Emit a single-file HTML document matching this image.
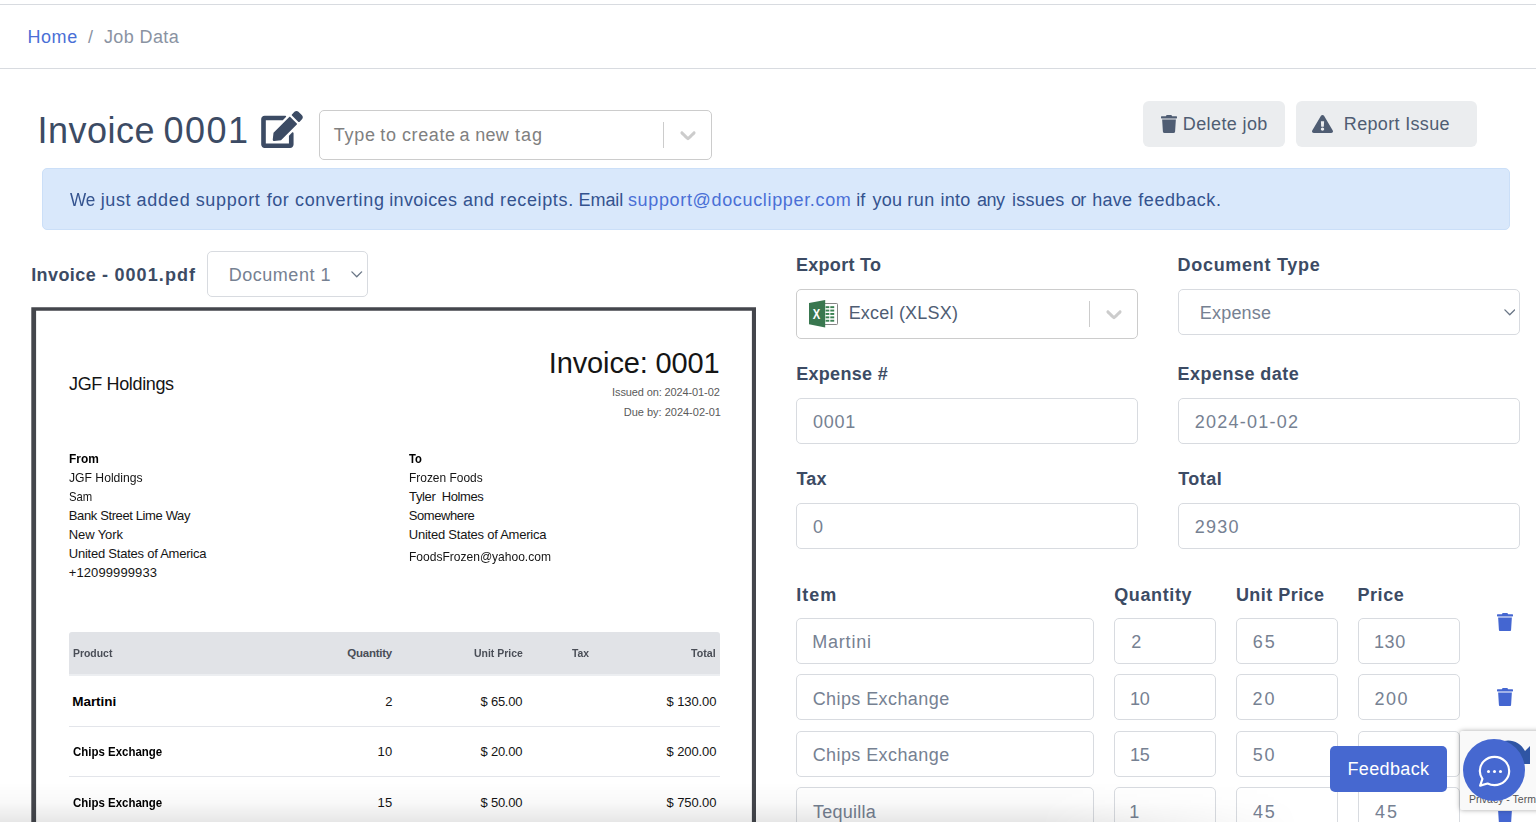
<!DOCTYPE html>
<html lang="en">
<head>
<meta charset="utf-8">
<title>Job Data - Invoice 0001</title>
<style>
*{box-sizing:border-box;margin:0;padding:0}
html,body{width:1536px;height:822px;overflow:hidden;background:#fff}
body{font-family:"Liberation Sans",sans-serif;color:#3c4b64;font-size:18px;position:relative}
.abs{position:absolute}
.t{position:absolute;white-space:nowrap;font-family:"Liberation Sans",sans-serif;font-weight:400;transform-origin:0 50%}
.line{left:0;width:1536px;height:1px;background:#d8dbe0}
.rsel{height:50px;border:1px solid #cccccc;border-radius:5px;background:#fff}
.rsel .bar{position:absolute;top:11px;width:1px;height:26px;background:#cccccc}
.btn{top:101px;height:46px;border-radius:6px;background:#ebedef}
.alert{left:42px;top:168px;width:1468px;height:62px;border:1px solid #cbdff8;border-radius:5px;background:#d9e8fb}
.inp{height:46px;border:1px solid #d8dbe0;border-radius:5px;background:#fff}
.frame{left:32px;top:307px;width:724px;height:540px;border:4px solid #47494f;background:#fff}
.thead{left:69px;top:632px;width:651px;height:44px;background:#e1e3e7;border-radius:3px 3px 0 0;border-bottom:2px solid #eceef1}
.hr{left:69px;width:651px;height:1px;background:#e3e5ea}
.blue{background:#4668d0}
</style>
</head>
<body>
<!-- top bar / breadcrumb -->
<div class="abs line" style="top:4px"></div>
<nav><span id="c1" class="t" style="left:27.40px;top:27px;font-size:18px;line-height:20px;color:#4a6fd6;letter-spacing:0.598px;">Home</span><span id="c2" class="t" style="left:87.99px;top:27px;font-size:18px;line-height:20px;color:#8a93a2;">/</span><span id="c3" class="t" style="left:103.93px;top:27px;font-size:18px;line-height:20px;color:#8a93a2;letter-spacing:0.401px;">Job Data</span></nav>
<div class="abs line" style="top:68px"></div>

<!-- title row -->
<h1><span id="h1_0" class="t" style="left:37.40px;top:110px;font-size:36px;line-height:41px;color:#3c4b64;letter-spacing:0.505px;">Invoice</span> <span id="h1_1" class="t" style="left:163.60px;top:110px;font-size:36px;line-height:41px;color:#3c4b64;letter-spacing:1.457px;">0001</span> </h1>
<svg class="abs" style="left:260.700px;top:111.400px" width="42" height="37" viewBox="0 0 576 512"><path fill="#3c4b64" d="M402.6 83.2l90.2 90.2c3.800 3.800 3.800 10 0 13.800L274.400 405.600l-92.800 10.300c-12.400 1.400-22.900-9.100-21.500-21.500l10.300-92.800L388.800 83.200c3.800-3.800 10-3.800 13.800 0zm162-22.900l-48.800-48.800c-15.200-15.200-39.900-15.200-55.200 0l-35.400 35.400c-3.800 3.800-3.800 10 0 13.800l90.200 90.200c3.800 3.800 10 3.800 13.800 0l35.400-35.400c15.200-15.300 15.200-40 0-55.200zM384 346.200V448H64V128h229.800c3.200 0 6.200-1.300 8.500-3.500l40-40c7.600-7.600 2.200-20.500-8.500-20.500H48C21.500 64 0 85.500 0 112v352c0 26.500 21.500 48 48 48h352c26.500 0 48-21.500 48-48V306.200c0-10.700-12.900-16-20.500-8.500l-40 40c-2.200 2.300-3.500 5.300-3.500 8.500z"/></svg>

<div class="abs rsel" style="left:319px;top:110px;width:393px">
  <div class="bar" style="left:343px"></div>
  <svg class="abs" style="left:355px;top:11px" width="26" height="26" viewBox="0 0 20 20"><path fill="#cccccc" d="M4.516 7.548c0.436-0.446 1.043-0.481 1.576 0l3.908 3.747 3.908-3.747c0.533-0.481 1.141-0.446 1.574 0 0.436 0.445 0.408 1.197 0 1.615-0.406 0.418-4.695 4.502-4.695 4.502-0.217 0.223-0.502 0.335-0.787 0.335s-0.570-0.112-0.789-0.335c0 0-4.287-4.084-4.695-4.502s-0.436-1.170 0-1.615z"/></svg>
</div>
<span id="ph_0" class="t" style="left:333.86px;top:125px;font-size:18px;line-height:20px;color:#808080;letter-spacing:0.691px;">Type</span> <span id="ph_1" class="t" style="left:380.26px;top:125px;font-size:18px;line-height:20px;color:#808080;letter-spacing:0.829px;">to</span> <span id="ph_2" class="t" style="left:402.00px;top:125px;font-size:18px;line-height:20px;color:#808080;letter-spacing:0.604px;">create</span> <span id="ph_3" class="t" style="left:459.57px;top:125px;font-size:18px;line-height:20px;color:#808080;">a</span> <span id="ph_4" class="t" style="left:475.16px;top:125px;font-size:18px;line-height:20px;color:#808080;letter-spacing:0.277px;">new</span> <span id="ph_5" class="t" style="left:515.04px;top:125px;font-size:18px;line-height:20px;color:#808080;letter-spacing:1.035px;">tag</span> 

<div class="abs btn" style="left:1143px;width:142px">
  <svg class="abs" style="left:17.500px;top:14px" width="16" height="18" viewBox="0 0 448 512" preserveAspectRatio="none"><path fill="#4f5d73" d="M432 32H312l-9.400-18.700A24 24 0 0 0 281.100 0H166.800a23.720 23.720 0 0 0-21.400 13.300L136 32H16A16 16 0 0 0 0 48v32a16 16 0 0 0 16 16h416a16 16 0 0 0 16-16V48a16 16 0 0 0-16-16zM53.200 467a48 48 0 0 0 47.900 45h245.800a48 48 0 0 0 47.900-45L416 128H32z"/></svg>
</div>
<span id="b1" class="t" style="left:1182.84px;top:114px;font-size:18px;line-height:20px;color:#4f5d73;letter-spacing:0.389px;">Delete job</span>
<div class="abs btn" style="left:1296px;width:181px">
  <svg class="abs" style="left:16px;top:14px" width="21" height="18" viewBox="0 0 576 512" preserveAspectRatio="none"><path fill="#4f5d73" d="M569.517 440.013C587.975 472.007 564.806 512 527.940 512H48.054c-36.937 0-59.999-40.055-41.577-71.987L246.423 23.985c18.467-32.009 64.720-31.951 83.154 0l239.940 416.028zM288 354c-25.405 0-46 20.595-46 46s20.595 46 46 46 46-20.595 46-46-20.595-46-46-46zm-43.673-165.346l7.418 136c.347 6.364 5.609 11.346 11.982 11.346h48.546c6.373 0 11.635-4.982 11.982-11.346l7.418-136c.375-6.874-5.098-12.654-11.982-12.654h-63.383c-6.884 0-12.356 5.780-11.981 12.654z"/></svg>
</div>
<span id="b2" class="t" style="left:1343.80px;top:114px;font-size:18px;line-height:20px;color:#4f5d73;letter-spacing:0.334px;">Report Issue</span>

<div class="abs alert"></div>
<p><span id="a1_0" class="t" style="left:70.03px;top:190px;font-size:18px;line-height:20px;color:#34538f;transform:scaleX(0.9524);">We</span> <span id="a1_1" class="t" style="left:100.75px;top:190px;font-size:18px;line-height:20px;color:#34538f;letter-spacing:0.577px;">just</span> <span id="a1_2" class="t" style="left:136.39px;top:190px;font-size:18px;line-height:20px;color:#34538f;letter-spacing:0.804px;">added</span> <span id="a1_3" class="t" style="left:195.63px;top:190px;font-size:18px;line-height:20px;color:#34538f;letter-spacing:0.698px;">support</span> <span id="a1_4" class="t" style="left:266.63px;top:190px;font-size:18px;line-height:20px;color:#34538f;letter-spacing:0.603px;">for</span> <span id="a1_5" class="t" style="left:295.00px;top:190px;font-size:18px;line-height:20px;color:#34538f;letter-spacing:0.650px;">converting</span> <span id="a1_6" class="t" style="left:389.14px;top:190px;font-size:18px;line-height:20px;color:#34538f;letter-spacing:0.408px;">invoices</span> <span id="a1_7" class="t" style="left:463.06px;top:190px;font-size:18px;line-height:20px;color:#34538f;letter-spacing:0.430px;">and</span> <span id="a1_8" class="t" style="left:500.00px;top:190px;font-size:18px;line-height:20px;color:#34538f;letter-spacing:0.641px;">receipts.</span> <span id="a1_9" class="t" style="left:578.50px;top:190px;font-size:18px;line-height:20px;color:#34538f;letter-spacing:-0.062px;">Email</span> <span id="a2" class="t" style="left:627.89px;top:190px;font-size:18px;line-height:20px;color:#4a6fd6;letter-spacing:0.661px;">support@docuclipper.com</span><span id="a3_0" class="t" style="left:856.16px;top:190px;font-size:18px;line-height:20px;color:#34538f;letter-spacing:0.134px;">if</span> <span id="a3_1" class="t" style="left:872.49px;top:190px;font-size:18px;line-height:20px;color:#34538f;letter-spacing:0.240px;">you</span> <span id="a3_2" class="t" style="left:907.14px;top:190px;font-size:18px;line-height:20px;color:#34538f;letter-spacing:0.536px;">run</span> <span id="a3_3" class="t" style="left:940.52px;top:190px;font-size:18px;line-height:20px;color:#34538f;letter-spacing:0.241px;">into</span> <span id="a3_4" class="t" style="left:977.05px;top:190px;font-size:18px;line-height:20px;color:#34538f;letter-spacing:-0.517px;">any</span> <span id="a3_5" class="t" style="left:1012.00px;top:190px;font-size:18px;line-height:20px;color:#34538f;letter-spacing:0.240px;">issues</span> <span id="a3_6" class="t" style="left:1071.00px;top:190px;font-size:18px;line-height:20px;color:#34538f;letter-spacing:-0.661px;">or</span> <span id="a3_7" class="t" style="left:1092.14px;top:190px;font-size:18px;line-height:20px;color:#34538f;letter-spacing:0.248px;">have</span> <span id="a3_8" class="t" style="left:1138.29px;top:190px;font-size:18px;line-height:20px;color:#34538f;letter-spacing:0.577px;">feedback.</span> </p>

<!-- left column: document preview -->
<span id="fn_0" class="t" style="left:31.16px;top:265px;font-size:18px;line-height:20px;color:#3c4b64;font-weight:700;letter-spacing:0.411px;">Invoice</span> <span id="fn_1" class="t" style="left:102.07px;top:265px;font-size:18px;line-height:20px;color:#3c4b64;font-weight:700;">-</span> <span id="fn_2" class="t" style="left:114.41px;top:265px;font-size:18px;line-height:20px;color:#3c4b64;font-weight:700;letter-spacing:1.086px;">0001.pdf</span> 
<div class="abs inp" style="left:207px;top:251px;width:161px">
  <svg class="abs" style="left:143.300px;top:18.900px" width="11.500" height="7" viewBox="0 0 11.500 7"><path d="M0.900 0.900l4.850 4.900L10.600 0.900" fill="none" stroke="#6a7686" stroke-width="1.350" stroke-linecap="round" stroke-linejoin="round"/></svg>
</div>
<span id="ds" class="t" style="left:228.81px;top:265px;font-size:18px;line-height:20px;color:#768192;letter-spacing:0.511px;">Document 1</span>

<svg class="abs" style="left:30px;top:306px" width="728" height="516" viewBox="30 306 728 516"><rect x="31" y="307" width="725" height="520" fill="#fff"/><path fill="#44464c" fill-rule="evenodd" d="M31.300 307.200H756V830H31.300zM36.100 310.700H751.900V830H36.100z"/></svg>
<section>
<span id="p1" class="t" style="left:69.01px;top:374px;font-size:18px;line-height:20px;color:#151515;letter-spacing:-0.356px;">JGF Holdings</span><span id="p2" class="t" style="left:548.80px;top:347px;font-size:29px;line-height:32px;color:#151515;letter-spacing:-0.135px;">Invoice: 0001</span><span id="p3" class="t" style="left:612.12px;top:386px;font-size:11px;line-height:12px;color:#5a5a5a;letter-spacing:-0.121px;">Issued on: 2024-01-02</span><span id="p4" class="t" style="left:623.70px;top:406px;font-size:11px;line-height:12px;color:#5a5a5a;">Due by: 2024-02-01</span>
<span id="f0" class="t" style="left:69.22px;top:451px;font-size:13px;line-height:15px;color:#000;font-weight:700;transform:scaleX(0.9149);">From</span><span id="f1" class="t" style="left:68.62px;top:470px;font-size:13px;line-height:15px;color:#151515;transform:scaleX(0.9357);">JGF Holdings</span><span id="f2" class="t" style="left:68.81px;top:489px;font-size:13px;line-height:15px;color:#151515;transform:scaleX(0.8689);">Sam</span><span id="f3" class="t" style="left:68.81px;top:508px;font-size:13px;line-height:15px;color:#151515;letter-spacing:-0.381px;">Bank Street Lime Way</span><span id="f4" class="t" style="left:68.81px;top:527px;font-size:13px;line-height:15px;color:#151515;letter-spacing:-0.117px;">New York</span><span id="f5" class="t" style="left:68.81px;top:546px;font-size:13px;line-height:15px;color:#151515;letter-spacing:-0.236px;">United States of America</span><span id="f6" class="t" style="left:68.71px;top:565px;font-size:13px;line-height:15px;color:#151515;letter-spacing:0.107px;">+12099999933</span>
<span id="t0" class="t" style="left:409.14px;top:451px;font-size:13px;line-height:15px;color:#000;font-weight:700;transform:scaleX(0.8628);">To</span><span id="t1" class="t" style="left:409.21px;top:470px;font-size:13px;line-height:15px;color:#151515;transform:scaleX(0.9180);">Frozen Foods</span><span id="t2" class="t" style="left:409.11px;top:489px;font-size:13px;line-height:15px;color:#151515;letter-spacing:-0.393px;">Tyler&nbsp; Holmes</span><span id="t3" class="t" style="left:408.79px;top:508px;font-size:13px;line-height:15px;color:#151515;letter-spacing:-0.421px;">Somewhere</span><span id="t4" class="t" style="left:408.81px;top:527px;font-size:13px;line-height:15px;color:#151515;letter-spacing:-0.236px;">United States of America</span><span id="t5" class="t" style="left:409.33px;top:549px;font-size:13px;line-height:15px;color:#151515;transform:scaleX(0.9254);">FoodsFrozen@yahoo.com</span>
<div class="abs thead"></div>
<span id="th1" class="t" style="left:72.77px;top:647px;font-size:11.5px;line-height:12px;color:#4a4e57;font-weight:700;transform:scaleX(0.9060);">Product</span><span id="th2" class="t" style="left:347.28px;top:647px;font-size:11.5px;line-height:12px;color:#4a4e57;font-weight:700;letter-spacing:-0.237px;">Quantity</span><span id="th3" class="t" style="left:473.85px;top:647px;font-size:11.5px;line-height:12px;color:#4a4e57;font-weight:700;transform:scaleX(0.9095);">Unit Price</span><span id="th4" class="t" style="left:571.63px;top:647px;font-size:11.5px;line-height:12px;color:#4a4e57;font-weight:700;transform:scaleX(0.9024);">Tax</span><span id="th5" class="t" style="left:691.08px;top:647px;font-size:11.5px;line-height:12px;color:#4a4e57;font-weight:700;transform:scaleX(0.9270);">Total</span>
<span id="r0a" class="t" style="left:72.31px;top:694px;font-size:13.5px;line-height:15px;color:#000;font-weight:700;letter-spacing:-0.064px;">Martini</span><span id="r0b" class="t" style="left:385.25px;top:694px;font-size:13px;line-height:15px;color:#151515;">2</span><span id="r0c" class="t" style="left:480.62px;top:694px;font-size:13px;line-height:15px;color:#151515;letter-spacing:-0.268px;">$ 65.00</span><span id="r0d" class="t" style="left:666.62px;top:694px;font-size:13px;line-height:15px;color:#151515;letter-spacing:-0.108px;">$ 130.00</span>
<div class="abs hr" style="top:726px"></div>
<span id="r1a" class="t" style="left:72.90px;top:744px;font-size:13.5px;line-height:15px;color:#000;font-weight:700;transform:scaleX(0.8492);">Chips Exchange</span><span id="r1b" class="t" style="left:377.57px;top:744px;font-size:13px;line-height:15px;color:#151515;letter-spacing:0.150px;">10</span><span id="r1c" class="t" style="left:480.62px;top:744px;font-size:13px;line-height:15px;color:#151515;letter-spacing:-0.268px;">$ 20.00</span><span id="r1d" class="t" style="left:666.62px;top:744px;font-size:13px;line-height:15px;color:#151515;letter-spacing:-0.108px;">$ 200.00</span>
<div class="abs hr" style="top:776px"></div>
<span id="r2a" class="t" style="left:72.90px;top:795px;font-size:13.5px;line-height:15px;color:#000;font-weight:700;transform:scaleX(0.8492);">Chips Exchange</span><span id="r2b" class="t" style="left:377.57px;top:795px;font-size:13px;line-height:15px;color:#151515;letter-spacing:0.173px;">15</span><span id="r2c" class="t" style="left:480.62px;top:795px;font-size:13px;line-height:15px;color:#151515;letter-spacing:-0.268px;">$ 50.00</span><span id="r2d" class="t" style="left:666.62px;top:795px;font-size:13px;line-height:15px;color:#151515;letter-spacing:-0.108px;">$ 750.00</span>
</section>

<!-- right column: form -->
<span id="l1" class="t" style="left:796.00px;top:255px;font-size:18px;line-height:20px;color:#3c4b64;font-weight:700;letter-spacing:0.286px;">Export To</span><span id="l2" class="t" style="left:1177.50px;top:255px;font-size:18px;line-height:20px;color:#3c4b64;font-weight:700;letter-spacing:0.711px;">Document Type</span>
<div class="abs rsel" style="left:796px;top:289px;width:342px">
  <svg class="abs" style="left:11px;top:9px" width="31" height="30" viewBox="0 0 31 30">
    <rect x="16" y="4.500" width="13.500" height="21" rx="0.800" fill="#fff" stroke="#858585" stroke-width="1"/>
    <g fill="#3b8253"><rect x="17.600" y="7.200" width="3.700" height="1.900"/><rect x="22.300" y="7.200" width="3.900" height="1.900"/><rect x="17.600" y="10.600" width="3.700" height="1.900"/><rect x="22.300" y="10.600" width="3.900" height="1.900"/><rect x="17.600" y="14" width="3.700" height="1.900"/><rect x="22.300" y="14" width="3.900" height="1.900"/><rect x="17.600" y="17.400" width="3.700" height="1.900"/><rect x="22.300" y="17.400" width="3.900" height="1.900"/><rect x="17.600" y="20.800" width="3.700" height="1.900"/><rect x="22.300" y="20.800" width="3.900" height="1.900"/></g>
    <path d="M1 4L17.200 1.100v27.500L1 25.200z" fill="#39774f"/>
    <text x="0" y="0" transform="translate(8.600 19.900) scale(0.800 1)" font-family="Liberation Sans, sans-serif" font-size="14" font-weight="700" fill="#fff" text-anchor="middle">X</text>
  </svg>
  <div class="bar" style="left:292px"></div>
  <svg class="abs" style="left:303.500px;top:11px" width="26" height="26" viewBox="0 0 20 20"><path fill="#cccccc" d="M4.516 7.548c0.436-0.446 1.043-0.481 1.576 0l3.908 3.747 3.908-3.747c0.533-0.481 1.141-0.446 1.574 0 0.436 0.445 0.408 1.197 0 1.615-0.406 0.418-4.695 4.502-4.695 4.502-0.217 0.223-0.502 0.335-0.787 0.335s-0.570-0.112-0.789-0.335c0 0-4.287-4.084-4.695-4.502s-0.436-1.170 0-1.615z"/></svg>
</div>
<span id="v1" class="t" style="left:848.65px;top:303px;font-size:18px;line-height:20px;color:#4f5d73;letter-spacing:0.205px;">Excel (XLSX)</span>
<div class="abs inp" style="left:1178px;top:289px;width:342px">
  <svg class="abs" style="left:324.500px;top:18.900px" width="11.500" height="7" viewBox="0 0 11.500 7"><path d="M0.900 0.900l4.850 4.900L10.600 0.900" fill="none" stroke="#6a7686" stroke-width="1.350" stroke-linecap="round" stroke-linejoin="round"/></svg>
</div>
<span id="v2" class="t" style="left:1199.71px;top:303px;font-size:18px;line-height:20px;color:#768192;letter-spacing:0.219px;">Expense</span>
<span id="l3" class="t" style="left:796.15px;top:364px;font-size:18px;line-height:20px;color:#3c4b64;font-weight:700;letter-spacing:0.308px;">Expense #</span><span id="l4" class="t" style="left:1177.62px;top:364px;font-size:18px;line-height:20px;color:#3c4b64;font-weight:700;letter-spacing:0.461px;">Expense date</span>
<div class="abs inp" style="left:796px;top:398px;width:342px"></div><span id="v3" class="t" style="left:813.00px;top:412px;font-size:18px;line-height:20px;color:#768192;letter-spacing:0.740px;">0001</span>
<div class="abs inp" style="left:1178px;top:398px;width:342px"></div><span id="v4" class="t" style="left:1194.78px;top:412px;font-size:18px;line-height:20px;color:#768192;letter-spacing:1.228px;">2024-01-02</span>
<span id="l5" class="t" style="left:796.47px;top:469px;font-size:18px;line-height:20px;color:#3c4b64;font-weight:700;letter-spacing:0.185px;">Tax</span><span id="l6" class="t" style="left:1178.21px;top:469px;font-size:18px;line-height:20px;color:#3c4b64;font-weight:700;letter-spacing:0.501px;">Total</span>
<div class="abs inp" style="left:796px;top:503px;width:342px"></div><span id="v5" class="t" style="left:813.04px;top:517px;font-size:18px;line-height:20px;color:#768192;">0</span>
<div class="abs inp" style="left:1178px;top:503px;width:342px"></div><span id="v6" class="t" style="left:1194.78px;top:517px;font-size:18px;line-height:20px;color:#768192;letter-spacing:1.259px;">2930</span>
<span id="l7" class="t" style="left:796.16px;top:585px;font-size:18px;line-height:20px;color:#3c4b64;font-weight:700;letter-spacing:0.989px;">Item</span><span id="l8" class="t" style="left:1114.25px;top:585px;font-size:18px;line-height:20px;color:#3c4b64;font-weight:700;letter-spacing:0.615px;">Quantity</span><span id="l9" class="t" style="left:1235.92px;top:585px;font-size:18px;line-height:20px;color:#3c4b64;font-weight:700;letter-spacing:0.462px;">Unit Price</span><span id="l10" class="t" style="left:1357.44px;top:585px;font-size:18px;line-height:20px;color:#3c4b64;font-weight:700;letter-spacing:0.573px;">Price</span>
<div class="abs inp" style="left:796px;top:618px;width:298px"></div><span id="i0a" class="t" style="left:812.27px;top:632px;font-size:18px;line-height:20px;color:#768192;letter-spacing:0.782px;">Martini</span>
<div class="abs inp" style="left:1114px;top:618px;width:102px"></div><span id="i0b" class="t" style="left:1131.17px;top:632px;font-size:18px;line-height:20px;color:#768192;">2</span>
<div class="abs inp" style="left:1236px;top:618px;width:102px"></div><span id="i0c" class="t" style="left:1252.81px;top:632px;font-size:18px;line-height:20px;color:#768192;letter-spacing:1.954px;">65</span>
<div class="abs inp" style="left:1358px;top:618px;width:102px"></div><span id="i0d" class="t" style="left:1373.89px;top:632px;font-size:18px;line-height:20px;color:#768192;letter-spacing:0.642px;">130</span>
<svg class="abs" style="left:1497px;top:612.8px" width="16" height="18.300" viewBox="0 0 448 512" preserveAspectRatio="none"><path fill="#4466d1" d="M432 32H312l-9.400-18.700A24 24 0 0 0 281.100 0H166.800a23.720 23.720 0 0 0-21.400 13.300L136 32H16A16 16 0 0 0 0 48v32a16 16 0 0 0 16 16h416a16 16 0 0 0 16-16V48a16 16 0 0 0-16-16zM53.200 467a48 48 0 0 0 47.900 45h245.800a48 48 0 0 0 47.900-45L416 128H32z"/></svg>
<div class="abs inp" style="left:796px;top:674px;width:298px"></div><span id="i1a" class="t" style="left:812.63px;top:689px;font-size:18px;line-height:20px;color:#768192;letter-spacing:0.420px;">Chips Exchange</span>
<div class="abs inp" style="left:1114px;top:674px;width:102px"></div><span id="i1b" class="t" style="left:1129.91px;top:689px;font-size:18px;line-height:20px;color:#768192;letter-spacing:-0.095px;">10</span>
<div class="abs inp" style="left:1236px;top:674px;width:102px"></div><span id="i1c" class="t" style="left:1252.39px;top:689px;font-size:18px;line-height:20px;color:#768192;letter-spacing:2.000px;">20</span>
<div class="abs inp" style="left:1358px;top:674px;width:102px"></div><span id="i1d" class="t" style="left:1374.45px;top:689px;font-size:18px;line-height:20px;color:#768192;letter-spacing:1.520px;">200</span>
<svg class="abs" style="left:1497px;top:687.8px" width="16" height="18.300" viewBox="0 0 448 512" preserveAspectRatio="none"><path fill="#4466d1" d="M432 32H312l-9.400-18.700A24 24 0 0 0 281.100 0H166.800a23.720 23.720 0 0 0-21.400 13.300L136 32H16A16 16 0 0 0 0 48v32a16 16 0 0 0 16 16h416a16 16 0 0 0 16-16V48a16 16 0 0 0-16-16zM53.200 467a48 48 0 0 0 47.900 45h245.800a48 48 0 0 0 47.900-45L416 128H32z"/></svg>
<div class="abs inp" style="left:796px;top:731px;width:298px"></div><span id="i2a" class="t" style="left:812.63px;top:745px;font-size:18px;line-height:20px;color:#768192;letter-spacing:0.420px;">Chips Exchange</span>
<div class="abs inp" style="left:1114px;top:731px;width:102px"></div><span id="i2b" class="t" style="left:1129.91px;top:745px;font-size:18px;line-height:20px;color:#768192;letter-spacing:-0.269px;">15</span>
<div class="abs inp" style="left:1236px;top:731px;width:102px"></div><span id="i2c" class="t" style="left:1252.86px;top:745px;font-size:18px;line-height:20px;color:#768192;letter-spacing:1.518px;">50</span>
<div class="abs inp" style="left:1358px;top:731px;width:102px"></div><span id="i2d" class="t" style="left:1374.37px;top:745px;font-size:18px;line-height:20px;color:#768192;letter-spacing:1.303px;">750</span>
<svg class="abs" style="left:1497px;top:749.8px" width="16" height="18.300" viewBox="0 0 448 512" preserveAspectRatio="none"><path fill="#4466d1" d="M432 32H312l-9.400-18.700A24 24 0 0 0 281.100 0H166.800a23.720 23.720 0 0 0-21.400 13.300L136 32H16A16 16 0 0 0 0 48v32a16 16 0 0 0 16 16h416a16 16 0 0 0 16-16V48a16 16 0 0 0-16-16zM53.200 467a48 48 0 0 0 47.900 45h245.800a48 48 0 0 0 47.900-45L416 128H32z"/></svg>
<div class="abs inp" style="left:796px;top:787px;width:298px"></div><span id="i3a" class="t" style="left:812.89px;top:802px;font-size:18px;line-height:20px;color:#768192;letter-spacing:0.260px;">Tequilla</span>
<div class="abs inp" style="left:1114px;top:787px;width:102px"></div><span id="i3b" class="t" style="left:1129.25px;top:802px;font-size:18px;line-height:20px;color:#768192;">1</span>
<div class="abs inp" style="left:1236px;top:787px;width:102px"></div><span id="i3c" class="t" style="left:1252.92px;top:802px;font-size:18px;line-height:20px;color:#768192;letter-spacing:1.846px;">45</span>
<div class="abs inp" style="left:1358px;top:787px;width:102px"></div><span id="i3d" class="t" style="left:1374.88px;top:802px;font-size:18px;line-height:20px;color:#768192;letter-spacing:2.000px;">45</span>
<svg class="abs" style="left:1497px;top:806px" width="16" height="19" viewBox="0 0 448 512"><path fill="#4466d1" d="M432 32H312l-9.400-18.700A24 24 0 0 0 281.100 0H166.800a23.720 23.720 0 0 0-21.400 13.300L136 32H16A16 16 0 0 0 0 48v32a16 16 0 0 0 16 16h416a16 16 0 0 0 16-16V48a16 16 0 0 0-16-16zM53.200 467a48 48 0 0 0 47.900 45h245.800a48 48 0 0 0 47.900-45L416 128H32z"/></svg>


<!-- recaptcha badge, feedback, chat -->
<div class="abs" style="left:1460px;top:731px;width:90px;height:79px;background:#f9f9f9;box-shadow:0 0 5px rgba(0,0,0,.35);border-radius:2px">
  <svg class="abs" style="left:38px;top:6px" width="34" height="34" viewBox="0 0 34 34"><path d="M6 4c8-2 17 2 21 10l5-5v18H14l6-6C17 14 12 9 6 4z" fill="#2f55a4"/></svg>
</div>
<span id="pt" class="t" style="left:1469.00px;top:793px;font-size:10.5px;line-height:12px;color:#555;">Privacy - Terms</span>
<div class="abs blue" style="left:1330px;top:746px;width:117px;height:46px;border-radius:5px"></div>
<span id="fb" class="t" style="left:1347.43px;top:759px;font-size:18px;line-height:20px;color:#fff;letter-spacing:0.363px;">Feedback</span>
<div class="abs blue" style="left:1463px;top:739px;width:62px;height:62px;border-radius:50%">
  <svg class="abs" style="left:12.500px;top:14.300px" width="37" height="37" viewBox="0 0 34 34"><path d="M17 3.500c7.500 0 13.500 5.800 13.500 13s-6 13-13.500 13c-2.300 0-4.500-.55-6.400-1.500L3.800 30l2.100-6.300C4.400 21.600 3.500 19.100 3.500 16.500c0-7.200 6-13 13.500-13z" fill="none" stroke="#fff" stroke-width="2" stroke-linejoin="round"/><circle cx="11.500" cy="17" r="1.400" fill="#fff"/><circle cx="17" cy="17" r="1.400" fill="#fff"/><circle cx="22.500" cy="17" r="1.400" fill="#fff"/></svg>
</div>
<div class="abs" style="left:0;top:782px;width:1536px;height:40px;background:linear-gradient(to bottom,rgba(0,0,0,0) 0%,rgba(0,0,0,.025) 50%,rgba(0,0,0,.095) 100%);-webkit-mask-image:linear-gradient(to right,#000 0,#000 1040px,transparent 1300px);mask-image:linear-gradient(to right,#000 0,#000 1040px,transparent 1300px);pointer-events:none"></div>
</body>
</html>
